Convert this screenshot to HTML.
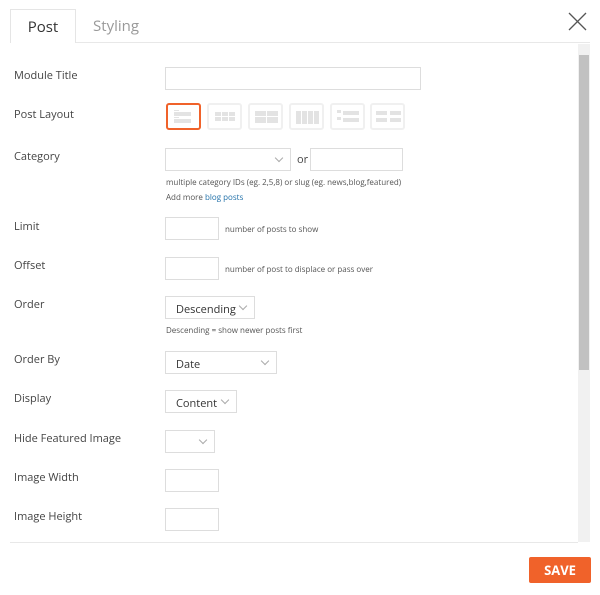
<!DOCTYPE html><html><head><style>
*{box-sizing:border-box;margin:0;padding:0}
body{width:600px;height:595px;background:#fff;font-family:"Open Sans","Liberation Sans",sans-serif;position:relative;overflow:hidden;color:#444}
.a{position:absolute}
.lbl{position:absolute;left:14px;font-size:11px;color:#444;margin-top:-1px}
.in{position:absolute;border:1px solid #ddd;background:#fff;height:23px}
.hint{position:absolute;font-size:8px;color:#555}
.sel{position:absolute;border:1px solid #ddd;height:23px;font-size:11px;color:#333;padding:5px 0 0 10px}
.chev{position:absolute;right:8px;top:6px;width:6px;height:6px;border-right:1px solid #aaa;border-bottom:1px solid #aaa;transform:rotate(45deg)}
.lay{position:absolute;top:103px;width:35px;height:27px;border:2px solid #f0f0f0;border-radius:3px}
.lay i{position:absolute;background:#e3e3e3}
</style></head><body>
<div class="a" style="left:10px;top:9px;width:66px;height:34px;border:1px solid #e5e5e5;border-bottom:none;background:#fff;font-size:15px;color:#333;text-align:center;padding-top:7px;z-index:2">Post</div>
<div class="a" style="left:93px;top:16px;font-size:15px;color:#999">Styling</div>
<div class="a" style="left:10px;top:42px;width:580px;border-top:1px solid #e8e8e8"></div>
<svg class="a" style="left:568px;top:12px" width="19" height="19"><path d="M1 1L18 18M18 1L1 18" stroke="#555" stroke-width="1.3"/></svg>
<div class="a" style="left:578px;top:44px;width:12px;height:498px;background:#f1f1f1"></div>
<div class="a" style="left:579px;top:55px;width:10px;height:315px;background:#c1c1c1"></div>
<div class="a" style="left:10px;top:542px;width:568px;border-top:1px solid #e8e8e8"></div>
<div class="lbl" style="top:69px">Module Title</div>
<div class="in" style="left:165px;top:67px;width:256px"></div>
<div class="lbl" style="top:108px">Post Layout</div>
<div class="lay" style="left:166px;border-color:#f0622a"><i style="left:6px;top:5px;width:5px;height:1px"></i><i style="left:6px;top:7px;width:17px;height:4px"></i><i style="left:6px;top:12px;width:5px;height:1px"></i><i style="left:6px;top:14px;width:17px;height:4px"></i></div>
<div class="lay" style="left:207px"><i style="left:6px;top:7px;width:6px;height:4px"></i><i style="left:13px;top:7px;width:6px;height:4px"></i><i style="left:20px;top:7px;width:6px;height:4px"></i><i style="left:6px;top:12px;width:6px;height:4px"></i><i style="left:13px;top:12px;width:6px;height:4px"></i><i style="left:20px;top:12px;width:6px;height:4px"></i></div>
<div class="lay" style="left:248px"><i style="left:5px;top:6px;width:11px;height:5px"></i><i style="left:17px;top:6px;width:11px;height:5px"></i><i style="left:5px;top:12px;width:11px;height:6px"></i><i style="left:17px;top:12px;width:11px;height:6px"></i></div>
<div class="lay" style="left:289px"><i style="left:5px;top:6px;width:23px;height:13px;background:repeating-linear-gradient(90deg,#e3e3e3 0 5px,#fff 5px 6px)"></i></div>
<div class="lay" style="left:330px"><i style="left:5px;top:5px;width:4px;height:3px"></i><i style="left:11px;top:6px;width:16px;height:4px"></i><i style="left:5px;top:12px;width:4px;height:3px"></i><i style="left:11px;top:13px;width:16px;height:4px"></i></div>
<div class="lay" style="left:370px"><i style="left:4px;top:6px;width:11px;height:4px"></i><i style="left:18px;top:6px;width:11px;height:4px"></i><i style="left:4px;top:13px;width:11px;height:4px"></i><i style="left:18px;top:13px;width:11px;height:4px"></i></div>
<div class="lbl" style="top:150px">Category</div>
<div class="sel" style="left:165px;top:148px;width:126px"><span class="chev"></span></div>
<div class="a" style="left:297px;top:152px;font-size:11px;color:#444">or</div>
<div class="in" style="left:310px;top:148px;width:93px"></div>
<div class="hint" style="left:166px;top:177px">multiple category IDs (eg. 2,5,8) or slug (eg. news,blog,featured)</div>
<div class="hint" style="left:166px;top:192px">Add more <span style="color:#1f6fa8">blog posts</span></div>
<div class="lbl" style="top:220px">Limit</div>
<div class="in" style="left:165px;top:217px;width:54px"></div>
<div class="hint" style="left:225px;top:224px">number of posts to show</div>
<div class="lbl" style="top:259px">Offset</div>
<div class="in" style="left:165px;top:257px;width:54px"></div>
<div class="hint" style="left:225px;top:264px">number of post to displace or pass over</div>
<div class="lbl" style="top:298px">Order</div>
<div class="sel" style="left:165px;top:296px;width:90px">Descending<span class="chev"></span></div>
<div class="hint" style="left:166px;top:325px">Descending = show newer posts first</div>
<div class="lbl" style="top:353px">Order By</div>
<div class="sel" style="left:165px;top:351px;width:112px">Date<span class="chev"></span></div>
<div class="lbl" style="top:392px">Display</div>
<div class="sel" style="left:165px;top:390px;width:72px">Content<span class="chev"></span></div>
<div class="lbl" style="top:432px">Hide Featured Image</div>
<div class="sel" style="left:165px;top:430px;width:50px"><span class="chev"></span></div>
<div class="lbl" style="top:471px">Image Width</div>
<div class="in" style="left:165px;top:469px;width:54px"></div>
<div class="lbl" style="top:510px">Image Height</div>
<div class="in" style="left:165px;top:508px;width:54px"></div>
<div class="a" style="left:529px;top:557px;width:62px;height:26px;background:#f0622a;border-radius:2px;color:#fff;font-weight:bold;font-size:13px;text-align:center;line-height:26px">SAVE</div>
</body></html>
